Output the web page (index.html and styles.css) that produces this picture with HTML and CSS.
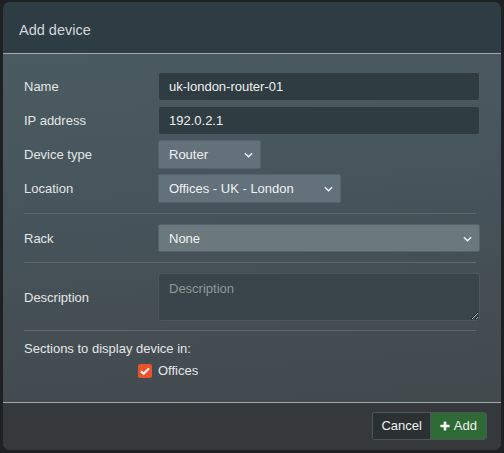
FILE: index.html
```html
<!DOCTYPE html>
<html lang="en">
<head>
  <meta charset="UTF-8" />
  <title>Add device</title>
  <link rel="stylesheet" href="styles.css">
</head>
<body>
<div class="modal">
  <div class="modal-header">
    <h4>Add device</h4>
  </div>

  <div class="modal-body">
    <div class="row">
      <label>Name</label>
      <input class="field" type="text" value="uk-london-router-01">
    </div>
    <div class="row">
      <label>IP address</label>
      <input class="field" type="text" value="192.0.2.1">
    </div>
    <div class="row">
      <label>Device type</label>
      <span class="select-wrap w-type">
        <select class="pick"><option>Router</option></select>
        <svg class="chev" viewBox="0 0 10 6"><path d="M1 1l4 4 4-4" /></svg>
      </span>
    </div>
    <div class="row">
      <label>Location</label>
      <span class="select-wrap w-loc">
        <select class="pick"><option>Offices - UK - London</option></select>
        <svg class="chev" viewBox="0 0 10 6"><path d="M1 1l4 4 4-4" /></svg>
      </span>
    </div>

    <hr>

    <div class="row">
      <label>Rack</label>
      <span class="select-wrap w-full">
        <select class="pick rack"><option>None</option></select>
        <svg class="chev" viewBox="0 0 10 6"><path d="M1 1l4 4 4-4" /></svg>
      </span>
    </div>

    <hr>

    <div class="row">
      <label>Description</label>
      <textarea class="field desc" placeholder="Description"></textarea>
    </div>

    <hr class="last">

    <div class="sections">
      <p>Sections to display device in:</p>
      <label class="check">
        <span class="box">
          <svg viewBox="0 0 14 14"><path d="M3 7.2l2.6 2.6L11 4.4" /></svg>
        </span>
        Offices
      </label>
    </div>
  </div>

  <div class="modal-footer">
    <div class="btn-group">
      <button class="btn cancel">Cancel</button>
      <button class="btn add">
        <svg viewBox="0 0 12 12"><rect x="4.4" y="0.5" width="3.2" height="11" rx="0.6"/><rect x="0.5" y="4.4" width="11" height="3.2" rx="0.6"/></svg>
        Add
      </button>
    </div>
  </div>
</div>
</body>
</html>
```

FILE: styles.css
```css
* { box-sizing: border-box; }
body {
  margin: 0;
  padding: 2px 3px 3px;
  background-color: #1d2124;
  font-family: "Liberation Sans", Arial, sans-serif;
  font-size: 13px;
  color: #e4e6e7;
}
.modal {
  width: 498px;
  height: 448px;
  border-radius: 7px;
  overflow: hidden;
  display: flex;
  flex-direction: column;
  background-color: #363a3d;
}
.modal-header {
  height: 52px;
  background-color: #2e3c44;
  border-bottom: 1px solid #a3a8aa;
  padding: 5px 16px 0;
  display: flex;
  align-items: center;
}
.modal-header h4 {
  margin: 0;
  font-size: 14.5px;
  font-weight: normal;
  color: #d3d7d9;
}
.modal-body {
  height: 349px;
  padding: 18px 21px 0 21px;
  background: linear-gradient(175deg, #4b5b62 0%, #46535a 45%, #42494d 100%);
  border-bottom: 1px solid #a3a8aa;
}
.row {
  display: flex;
  align-items: center;
  margin-bottom: 5px;
}
.row label {
  width: 134px;
  flex-shrink: 0;
}
.field {
  width: 322px;
  height: 29px;
  padding: 0 10px;
  background-color: #2f3c42;
  border: 1px solid #4c585e;
  border-radius: 3px;
  color: #eef0f1;
  font-family: inherit;
  font-size: 13px;
  outline: none;
}
.desc {
  height: 48px;
  padding: 7px 10px;
  resize: vertical;
  background-color: #39454a;
}
.desc::placeholder { color: #8f989c; }
.select-wrap {
  position: relative;
  display: inline-block;
}
.pick {
  -webkit-appearance: none;
  appearance: none;
  width: 100%;
  height: 29px;
  padding: 0 10px;
  background-color: #63717a;
  border: 1px solid #56636a;
  border-radius: 2px;
  color: #f0f2f3;
  font-family: inherit;
  font-size: 13px;
  outline: none;
}
.pick.rack { background-color: #6b787e; height: 28px; }
.w-type { width: 103px; }
.w-loc { width: 183px; }
.w-full { width: 322px; }
.chev {
  position: absolute;
  right: 8px;
  top: 12px;
  width: 9px;
  height: 6px;
  fill: none;
  stroke: #f2f4f5;
  stroke-width: 1.6;
}
hr {
  border: 0;
  border-top: 1px solid #5d686e;
  margin: 10px 4px 10px 0;
}
hr.last { margin-top: 9px; }
.sections p {
  margin: 0 0 6px;
}
.check {
  display: flex;
  align-items: center;
  gap: 6px;
  margin-left: 114px;
}
.box {
  width: 14px;
  height: 14px;
  border-radius: 2px;
  background-color: #e9532b;
  display: flex;
  margin-top: 2px;
}
.box svg {
  width: 14px;
  height: 14px;
  fill: none;
  stroke: #ffffff;
  stroke-width: 2;
}
.modal-footer {
  flex: 1;
  display: flex;
  justify-content: flex-end;
  align-items: center;
  padding: 0 14px 2px 0;
  background-color: #35393c;
}
.btn-group {
  display: flex;
  border: 1px solid #4e5559;
  border-radius: 3px;
  overflow: hidden;
}
.btn {
  height: 26px;
  border: none;
  font-family: inherit;
  font-size: 13px;
  color: #eef0f1;
  padding: 0 8px;
  display: flex;
  align-items: center;
  gap: 4px;
}
.cancel {
  background-color: #2b3033;
  border-right: 1px solid #4e5559;
}
.add { background-color: #2e6a36; padding: 0 9px 0 9px; }
.add svg {
  width: 10px;
  height: 10px;
  fill: #f4f6f4;
}
```
